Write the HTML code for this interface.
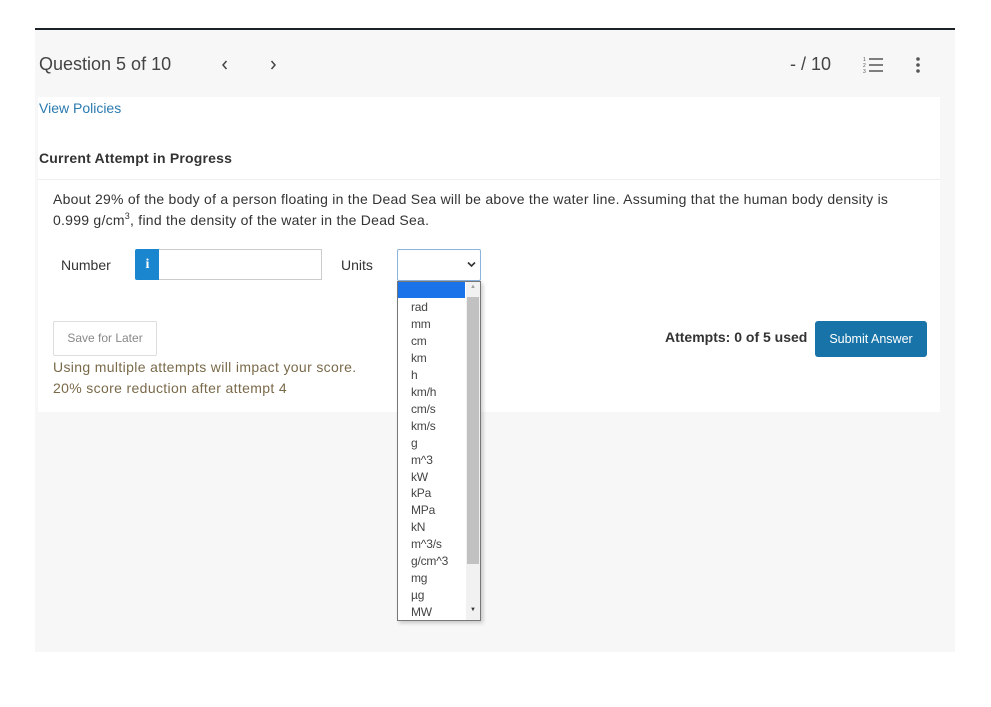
<!DOCTYPE html>
<html><head><meta charset="utf-8"><style>
*{margin:0;padding:0;box-sizing:border-box}
body{width:991px;height:707px;background:#fff;font-family:"Liberation Sans",sans-serif;position:relative;overflow:hidden;color:#333}
.a{position:absolute;white-space:nowrap}
sup{line-height:0;font-size:9px;vertical-align:6px}
</style></head><body>
<div class="a" style="left:35px;top:30px;width:920px;height:622px;background:#f7f7f7"></div>
<div class="a" style="left:35px;top:28px;width:920px;height:2px;background:#1d2228"></div>
<div class="a" style="left:38px;top:97px;width:902px;height:315px;background:#fff"></div>
<div class="a" style="left:39px;top:54px;font-size:18px;color:#444">Question 5 of 10</div>
<svg class="a" style="left:220px;top:59px" width="10" height="12"><path d="M6.5 2 L3 6 L6.5 10" stroke="#444" stroke-width="1.5" fill="none"/></svg>
<svg class="a" style="left:268px;top:59px" width="10" height="12"><path d="M3.5 2 L7 6 L3.5 10" stroke="#444" stroke-width="1.5" fill="none"/></svg>
<div class="a" style="left:790px;top:54px;font-size:18px;color:#444">- / 10</div>
<svg class="a" style="left:862px;top:56px" width="22" height="18" viewBox="0 0 22 18"><g stroke="#555" stroke-width="1.5"><line x1="7" y1="3" x2="21" y2="3"/><line x1="7" y1="9" x2="21" y2="9"/><line x1="7" y1="15" x2="21" y2="15"/></g><g fill="#555" font-size="5" font-family="Liberation Sans"><text x="1" y="5">1</text><text x="1" y="11">2</text><text x="1" y="17">3</text></g></svg>
<svg class="a" style="left:914px;top:56px" width="8" height="18"><circle cx="4" cy="3" r="1.8" fill="#555"/><circle cx="4" cy="9" r="1.8" fill="#555"/><circle cx="4" cy="15" r="1.8" fill="#555"/></svg>
<div class="a" style="left:39px;top:100px;font-size:14px;color:#2a7ab0">View Policies</div>
<div class="a" style="left:39px;top:150px;font-size:14px;font-weight:bold;color:#333;letter-spacing:0.2px">Current Attempt in Progress</div>
<div class="a" style="left:38px;top:179px;width:902px;height:1px;background:#eee"></div>
<div class="a" style="left:53px;top:189px;font-size:14px;color:#333;letter-spacing:0.25px;line-height:21px">About 29% of the body of a person floating in the Dead Sea will be above the water line. Assuming that the human body density is<br>0.999 g/cm<sup>3</sup>, find the density of the water in the Dead Sea.</div>
<div class="a" style="left:61px;top:257px;font-size:14px;color:#333">Number</div>
<div class="a" style="left:135px;top:249px;width:25px;height:31px;background:#1a86d0;border-radius:2px 0 0 2px;color:#fff;font-family:'Liberation Serif',serif;font-weight:bold;font-size:14px;text-align:center;line-height:31px">i</div>
<div class="a" style="left:159px;top:249px;width:163px;height:31px;border:1px solid #ccc;border-left:none;background:#fff"></div>
<div class="a" style="left:341px;top:257px;font-size:14px;color:#333">Units</div>
<div class="a" style="left:397px;top:249px;width:84px;height:32px;border:1px solid #8bb4dd;background:#fff;border-radius:2px"></div>
<svg class="a" style="left:467px;top:261px" width="9" height="7"><path d="M1 1.5 L4.5 5 L8 1.5" stroke="#333" stroke-width="1.6" fill="none"/></svg>
<div class="a" style="left:397px;top:281px;width:84px;height:340px;border:1px solid #777;background:#fff;box-shadow:2px 2px 4px rgba(0,0,0,.2)"></div>
<div class="a" style="left:398px;top:282px;width:67px;height:16px;background:#1a73e8"></div>
<div class="a" style="left:466px;top:282px;width:14px;height:338px;background:#f1f1f1"></div>
<div class="a" style="left:467px;top:297px;width:12px;height:267px;background:#c1c1c1"></div>
<div class="a" style="left:470px;top:284px;font-size:6px;color:#a0a0a0">&#9650;</div>
<div class="a" style="left:470px;top:607px;font-size:6px;color:#333">&#9660;</div>
<div class="a" style="left:411px;top:299px;font-size:12px;color:#444;line-height:16.95px;letter-spacing:-0.2px">rad<br>mm<br>cm<br>km<br>h<br>km/h<br>cm/s<br>km/s<br>g<br>m^3<br>kW<br>kPa<br>MPa<br>kN<br>m^3/s<br>g/cm^3<br>mg<br>µg<br>MW</div>
<div class="a" style="left:53px;top:321px;width:104px;height:35px;border:1px solid #ddd;border-radius:2px;font-size:12px;color:#888;text-align:center;line-height:33px">Save for Later</div>
<div class="a" style="left:53px;top:357px;font-size:14px;color:#7a6a4a;line-height:21px;letter-spacing:0.35px">Using multiple attempts will impact your score.<br>20% score reduction after attempt 4</div>
<div class="a" style="left:665px;top:329px;font-size:14px;font-weight:bold;color:#333;letter-spacing:0px">Attempts: 0 of 5 used</div>
<div class="a" style="left:815px;top:321px;width:112px;height:36px;background:#1874a8;border-radius:3px;color:#fff;font-size:12.5px;text-align:center;line-height:36px;letter-spacing:0px">Submit Answer</div>
</body></html>
